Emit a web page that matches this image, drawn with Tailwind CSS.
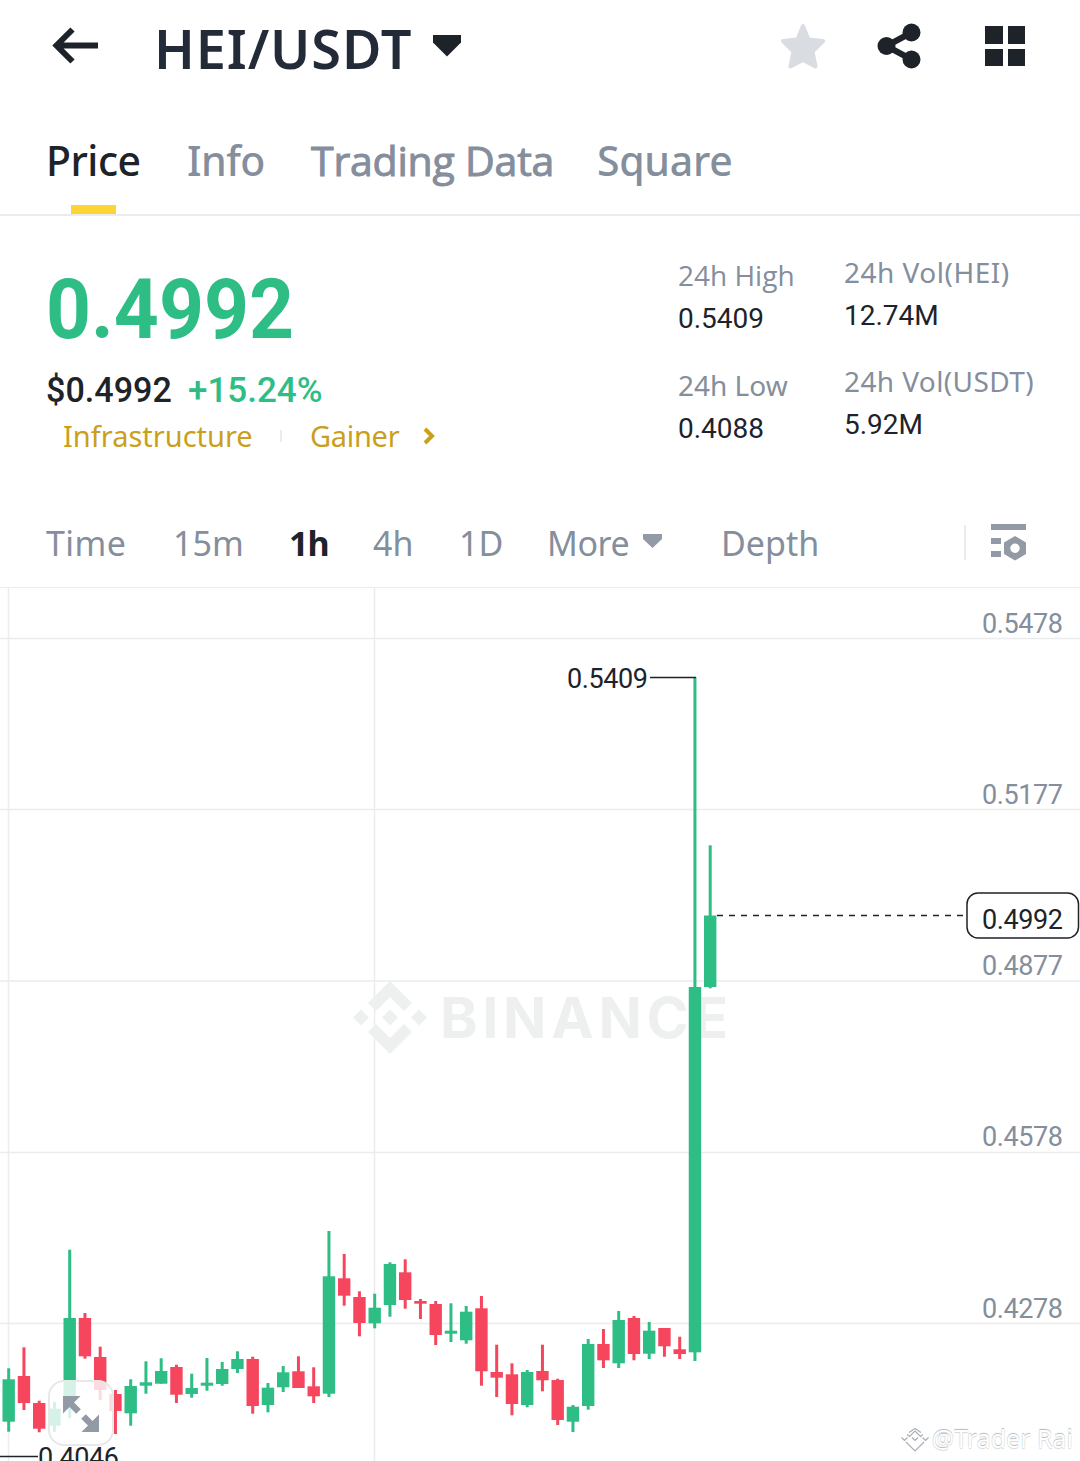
<!DOCTYPE html>
<html lang="en">
<head>
  <meta charset="UTF-8" />
  <meta name="viewport" content="width=device-width, initial-scale=1.0"/>
  <title>HEI/USDT</title>
  <script src="https://cdn.jsdelivr.net/npm/@tailwindcss/browser@4"></script>
</head>
<body class="bg-white w-[1080px] h-[1461px] overflow-hidden font-['Noto_Sans',sans-serif] text-[#1e2329] whitespace-nowrap">

  <!-- Header -->
  <header class="flex items-center h-[92px] pl-[52px] pr-[55px]">
    <svg class="w-[46px] h-[38px] mr-[56px] shrink-0" viewBox="0 0 46 38" fill="none" stroke="#1e2329" stroke-width="6">
      <path d="M4 18.5H46M20.5 2.5L4.500 18.500L20.5 34.500"/>
    </svg>
    <h1 class="w-[279px] pt-[3px] text-[54px] leading-[90px] font-semibold tracking-[0.9px] text-[#232b38]">HEI/USDT</h1>
    <svg class="w-[28px] h-[22px] shrink-0" viewBox="0 0 28 22" fill="#1e2329">
      <path d="M0 0H28V7.500L14 21.500L0 7.500Z"/>
    </svg>
    <div class="flex items-center ml-auto">
      <svg class="w-[46px] h-[46px] mr-[51px]" viewBox="0 0 46 46" fill="#d9dce1" stroke="#d9dce1" stroke-width="4" stroke-linejoin="round">
        <path d="M23 3L28.500 16.500L43 18L32.500 28.500L35.500 43.500L23 37L10.500 43.500L13.500 28.500L3 18L17.500 16.500Z"/>
      </svg>
      <svg class="w-[44px] h-[46px] mr-[64px]" viewBox="0 0 44 46" fill="#1e2329">
        <path d="M9.500 23L34.500 9.500M9.500 23L34.500 36.500" stroke="#1e2329" stroke-width="6"/>
        <circle cx="9.500" cy="23" r="9"/>
        <circle cx="34.500" cy="9.500" r="9"/>
        <circle cx="34.500" cy="36.500" r="9"/>
      </svg>
      <div class="grid grid-cols-2 gap-[5px] w-[40px] h-[40px]">
        <i class="bg-[#1e2329]"></i><i class="bg-[#1e2329]"></i>
        <i class="bg-[#1e2329]"></i><i class="bg-[#1e2329]"></i>
      </div>
    </div>
  </header>

  <!-- Tabs -->
  <nav class="flex h-[124px] pl-[46px] pt-[38px] text-[41px] leading-[60px] font-medium text-[#848e9c] border-b-2 border-[#eaecef]">
    <div class="w-[141px] text-[#1e2329]">
      <span class="tracking-[-0.5px]">Price</span>
      <div class="ml-[25px] mt-[15px] w-[45px] h-[9px] bg-[#fcd535]"></div>
    </div>
    <span class="w-[124px] tracking-[-0.5px]">Info</span>
    <span class="w-[286px] font-['Open_Sans'] tracking-[-0.2px] [-webkit-text-stroke:1px_#848e9c]">Trading Data</span>
    <span class="tracking-[-0.3px]">Square</span>
  </nav>

  <!-- Price summary -->
  <section class="flex h-[284px] pl-[46px]">
    <div class="w-[632px] pt-[48px]">
      <div class="h-[90px] leading-[92px] text-[84px] font-bold font-['Roboto'] text-[#2ebd85]">
        <span class="inline-block origin-left scale-x-[0.935]">0.4992</span>
      </div>
      <div class="flex h-[50px] leading-[52px] mt-[11px] text-[35px] font-medium font-['Roboto']">
        <span class="w-[142px]"><span class="inline-block origin-left scale-x-[0.975]">$0.4992</span></span>
        <span class="text-[#2ebd85]">+15.24%</span>
      </div>
      <div class="flex items-center h-[42px] leading-[42px] pl-[17px] text-[29px] text-[#c99f1c]">
        <span class="w-[217px]">Infrastructure</span>
        <i class="w-[2px] h-[12px] mr-[28px] bg-[#eaecef]"></i>
        <span class="w-[113px] tracking-[-0.3px]">Gainer</span>
        <svg class="w-[12px] h-[18px]" viewBox="0 0 12 18" fill="none" stroke="#c99f1c" stroke-width="4">
          <path d="M2 2L9 9L2 16"/>
        </svg>
      </div>
    </div>
    <div class="w-[166px] pt-[38px] text-[28px] leading-[43px]">
      <div class="text-[#848e9c] font-['Open_Sans']">24h High</div>
      <div class="font-['Roboto']">0.5409</div>
      <div class="text-[#848e9c] mt-[24px]">24h Low</div>
      <div class="font-['Roboto']">0.4088</div>
    </div>
    <div class="pt-[35px] text-[28px] leading-[43px]">
      <div class="text-[#848e9c] tracking-[0.5px]">24h Vol(HEI)</div>
      <div class="font-['Roboto']">12.74M</div>
      <div class="text-[#848e9c] tracking-[0.4px] mt-[23px]">24h Vol(USDT)</div>
      <div class="font-['Roboto']">5.92M</div>
    </div>
  </section>

  <!-- Intervals -->
  <div class="flex items-center h-[88px] pl-[46px] pr-[54px] pb-[2px] text-[34px] leading-[86px] text-[#848e9c] border-b border-[#eaecef]">
    <span class="w-[127px] tracking-[0.4px]">Time</span>
    <span class="w-[116px]">15m</span>
    <span class="w-[84px] font-bold tracking-[-1px] text-[#1e2329]">1h</span>
    <span class="w-[86px]">4h</span>
    <span class="w-[88px]">1D</span>
    <span class="w-[96px] tracking-[-0.4px]">More</span>
    <svg class="w-[19px] h-[14px] mr-[59px] mb-[4px]" viewBox="0 0 19 14" fill="#929aa5"><path d="M0 0H19V5L9.500 14L0 5Z"/></svg>
    <span>Depth</span>
    <i class="w-[2px] h-[35px] ml-auto mr-[25px] bg-[#eaecef]"></i>
    <svg class="w-[36px] h-[37px] -mr-px" viewBox="0 0 36 37" fill="#929aa5">
      <path d="M0 0H35V6H0ZM0 14H10V20H0ZM0 27H10V33H0Z"/>
      <path fill-rule="evenodd" d="M24 12L35 18.500V30L24 36.500L13 30V18.500ZM24 19.500A4.700 4.700 0 1 0 24 29A4.700 4.700 0 1 0 24 19.500Z"/>
    </svg>
  </div>

  <!-- Chart -->
  <main class="relative">
    <svg class="block w-[1080px] h-[873px] font-['Roboto']" viewBox="0 588 1080 873" font-size="27">
      <path stroke="#eaecef" stroke-width="1.500" d="M0 638.500H1080M0 809.500H1080M0 981H1080M0 1152.500H1080M0 1323.500H1080M8.500 588V1461M374.500 588V1461"/>
      <g fill="#eef0f0">
        <path d="M390 981L412 1003L404 1011L390 997L376 1011L368 1003ZM390 1054L412 1032L404 1024L390 1038L376 1024L368 1032ZM390 1009.500L398 1017.500L390 1025.500L382 1017.500ZM361 1009.500L369 1017.500L361 1025.500L353 1017.500ZM419 1009.500L427 1017.500L419 1025.500L411 1017.500Z"/>
        <text x="440" y="1038" class="font-['Inter']" font-size="57" font-weight="700" textLength="288">BINANCE</text>
      </g>
      <g id="candles"></g>
      <path d="M717 915.500H963" stroke="#1e2329" stroke-width="1.500" stroke-dasharray="6 6"/>
      <path d="M650 677.500H696M0 1456.500H38" stroke="#1e2329" stroke-width="1.500"/>
      <g fill="#848e9c">
        <text x="982" y="633" textLength="81">0.5478</text>
        <text x="982" y="804" textLength="81">0.5177</text>
        <text x="982" y="975" textLength="81">0.4877</text>
        <text x="982" y="1146" textLength="81">0.4578</text>
        <text x="982" y="1318" textLength="81">0.4278</text>
      </g>
      <rect x="967" y="893" width="111.500" height="45" rx="11" fill="#fff" stroke="#1e2329" stroke-width="1.500"/>
      <g fill="#1e2329">
        <text x="982" y="929" textLength="81">0.4992</text>
        <text x="567" y="688" textLength="81">0.5409</text>
        <text x="38" y="1467" textLength="81">0.4046</text>
      </g>
    </svg>

    <!-- Fullscreen button -->
    <button class="absolute left-[48px] bottom-[15px] w-[66px] h-[66px] rounded-[16px] border-2 border-[#e6e8ea] bg-white/80">
      <svg class="w-[62px] h-[62px]" viewBox="50 1382 62 62" fill="#929aa5">
        <path d="M63 1396H80.500L63 1413.500ZM81.500 1432H99V1414.500Z"/>
        <path d="M68 1401L78.500 1411.500M83.500 1416.500L94 1427" stroke="#929aa5" stroke-width="6.500"/>
      </svg>
    </button>

    <!-- Author mark -->
    <div class="absolute right-[7px] bottom-[5px] flex items-center text-[25px] leading-[36px] text-white [text-shadow:0_-1px_1px_#b4b9c1,0_1px_1px_#d5d8dd]">
      <svg class="w-[28px] h-[24px] mr-[3px] mt-[3px]" viewBox="0 0 28 24" fill="none" stroke="#a9aeb6" stroke-width="1.200">
        <path d="M6 6.500L8.500 8.500L14 3L19.500 8.500L22 6.500M8 4.500L14 0.500L20 4.500M0.500 9.500L3.500 12.500L6.500 9.500M11 9.500L14 12.500L17 9.500M21.500 9.500L24.500 12.500L27.500 9.500M5 14L14 23L23 14"/>
      </svg>
      <span>@Trader Rai</span>
    </div>
  </main>

  <script>
    // [up, high, body top, body bottom, low] in chart pixels
    const candles = [
      [1, 1368.3, 1379.3, 1421.7, 1431.7],
      [0, 1347.3, 1376, 1403, 1410],
      [0, 1400.7, 1403, 1428.7, 1432.3],
      [1, 1402, 1408.7, 1425.7, 1431.7],
      [1, 1249.7, 1318, 1396, 1418],
      [0, 1313, 1318, 1356.3, 1358.7],
      [0, 1346.7, 1357, 1390, 1400],
      [0, 1390, 1394, 1411, 1434],
      [1, 1379.3, 1386, 1413.3, 1425.7],
      [1, 1361.3, 1382.3, 1385.7, 1393.7],
      [1, 1358.3, 1371, 1383.7, 1383.7],
      [0, 1364.7, 1367, 1394.7, 1403],
      [1, 1373.7, 1388, 1394, 1397.7],
      [1, 1358, 1382.7, 1385.7, 1390.7],
      [1, 1362, 1369, 1384, 1385.7],
      [1, 1351.3, 1359, 1369, 1373],
      [0, 1356.7, 1359, 1406, 1413.7],
      [1, 1383, 1387.7, 1405, 1412.3],
      [1, 1366, 1372.3, 1387.3, 1392],
      [0, 1356.3, 1371.3, 1388, 1388],
      [0, 1367.3, 1386.3, 1396.3, 1403],
      [1, 1231, 1276.3, 1393.7, 1397],
      [0, 1254, 1278.3, 1295.7, 1305.7],
      [0, 1291.3, 1297, 1323, 1336.3],
      [1, 1293.7, 1307.7, 1323.3, 1328.3],
      [1, 1262.3, 1264, 1305, 1316.7],
      [0, 1259.3, 1272.3, 1300, 1308.7],
      [0, 1299, 1301, 1303.7, 1319],
      [0, 1301, 1304, 1335, 1345],
      [1, 1303.3, 1330.7, 1333.7, 1342],
      [1, 1306, 1311.7, 1340.3, 1343.7],
      [0, 1296, 1308.3, 1371.3, 1385.7],
      [0, 1344.7, 1372, 1377.7, 1397],
      [0, 1363.3, 1374.3, 1404, 1415.3],
      [1, 1370, 1372, 1405, 1407.3],
      [0, 1344.7, 1371, 1380.3, 1391.3],
      [0, 1378.7, 1380, 1420, 1425],
      [1, 1405, 1406.7, 1421.7, 1432],
      [1, 1339, 1344, 1406, 1409.7],
      [0, 1329, 1344, 1360.3, 1368],
      [1, 1311, 1320, 1363.3, 1368],
      [0, 1316, 1318, 1354, 1360.3],
      [1, 1322, 1330.7, 1353.7, 1359],
      [0, 1328, 1328, 1346.3, 1356.7],
      [0, 1336.7, 1349.3, 1354, 1359],
      [1, 677, 987, 1352.3, 1361],
      [1, 845.3, 915.5, 987, 988.3]
    ];
    document.getElementById('candles').innerHTML = candles.map(([up, high, top, bottom, low], i) => {
      const x = 8.7 + i * 15.25;
      return `<g fill="${up ? '#2ebd85' : '#f6465d'}">
        <rect x="${x - 1.5}" y="${high}" width="3" height="${low - high}"/>
        <rect x="${x - 6.2}" y="${top}" width="12.4" height="${bottom - top}"/>
      </g>`;
    }).join('');
  </script>
</body>
</html>
